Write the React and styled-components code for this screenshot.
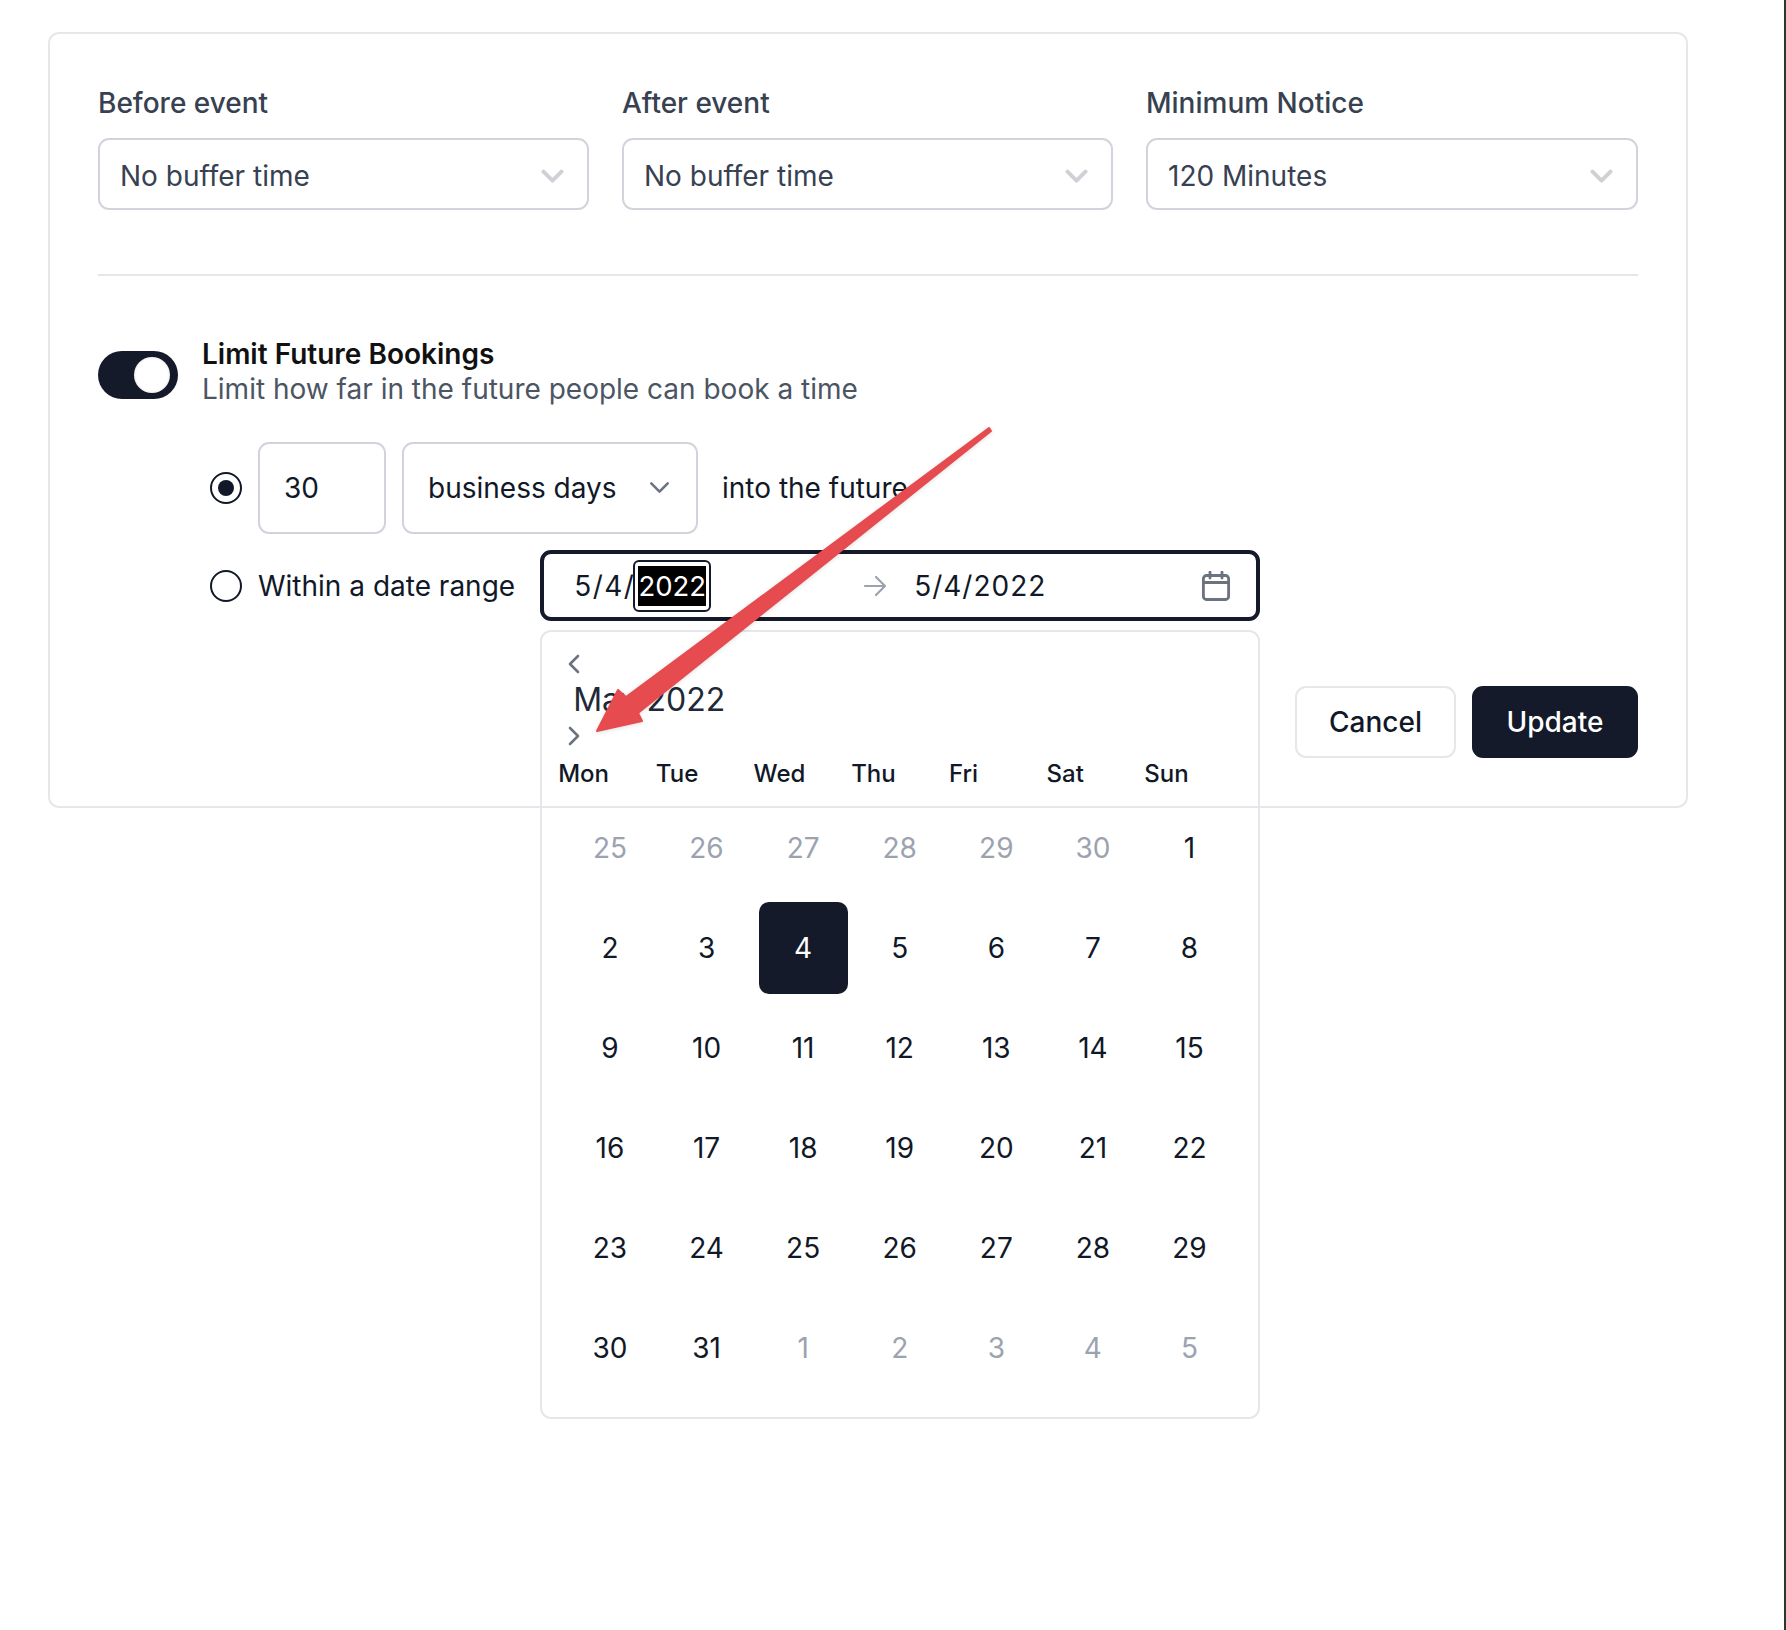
import React from 'react';
import styled, { createGlobalStyle } from 'styled-components';

const GlobalStyle = createGlobalStyle`
  html, body {
    margin: 0;
    padding: 0;
    background: #fff;
  }
  * {
    box-sizing: border-box;
  }
`;

const Chevron = ({ size = 23, color = '#cfd1d6', width = 4 }) => (
  <svg width={size} height={size * 0.62} viewBox="0 0 23 14" fill="none">
    <path d="M2.5 2.5l9 9 9-9" stroke={color} strokeWidth={width} strokeLinecap="round" strokeLinejoin="round" />
  </svg>
);

const days = [
  [25, 26, 27, 28, 29, 30, 1],
  [2, 3, 4, 5, 6, 7, 8],
  [9, 10, 11, 12, 13, 14, 15],
  [16, 17, 18, 19, 20, 21, 22],
  [23, 24, 25, 26, 27, 28, 29],
  [30, 31, 1, 2, 3, 4, 5],
];

const isMuted = (row, value) => (row === 0 && value > 1) || (row === 5 && value < 6);

const App = () => (
  <Page>
    <GlobalStyle />
    <Card>
      <Fields>
        {[
          ['Before event', 'No buffer time'],
          ['After event', 'No buffer time'],
          ['Minimum Notice', '120 Minutes'],
        ].map(([label, value]) => (
          <div key={label}>
            <FieldLabel>{label}</FieldLabel>
            <SelectBox>
              <span>{value}</span>
              <Chevron />
            </SelectBox>
          </div>
        ))}
      </Fields>
      <Divider />
      <ToggleRow>
        <Toggle />
        <div>
          <ToggleTitle>Limit Future Bookings</ToggleTitle>
          <ToggleDesc>Limit how far in the future people can book a time</ToggleDesc>
        </div>
      </ToggleRow>
      <Options>
        <OptionRow>
          <Radio $checked />
          <NumberBox>30</NumberBox>
          <UnitSelect>
            <span>business days</span>
            <Chevron size={21} color="#6b7280" width={2.8} />
          </UnitSelect>
          <OptionText>into the future</OptionText>
        </OptionRow>
        <OptionRow>
          <Radio />
          <OptionText>Within a date range</OptionText>
          <RangeWrap>
            <RangeField>
              <StartDate>
                5/4/<Segment>2022</Segment>
              </StartDate>
              <svg width="24" height="22" viewBox="0 0 24 22" fill="none">
                <path d="M2 11h20M13 2l9 9-9 9" stroke="#9ca3af" strokeWidth="2.2" strokeLinecap="round" strokeLinejoin="round" />
              </svg>
              <EndDate>5/4/2022</EndDate>
              <svg width="28" height="30" viewBox="0 0 28 30" fill="none">
                <rect x="1.4" y="4.5" width="25.2" height="24" rx="3" stroke="#6b7280" strokeWidth="2.8" />
                <path d="M1.4 11.5h25.2M8 1v6M20 1v6" stroke="#6b7280" strokeWidth="2.8" strokeLinecap="round" />
              </svg>
            </RangeField>
            <Popup>
              <MonthNav>
                <svg width="14" height="22" viewBox="0 0 14 22" fill="none">
                  <path d="M11 3l-8 8 8 8" stroke="#6b7280" strokeWidth="2.6" strokeLinecap="round" strokeLinejoin="round" />
                </svg>
                <MonthTitle>May 2022</MonthTitle>
                <svg width="14" height="22" viewBox="0 0 14 22" fill="none">
                  <path d="M3 3l8 8-8 8" stroke="#6b7280" strokeWidth="2.6" strokeLinecap="round" strokeLinejoin="round" />
                </svg>
              </MonthNav>
              <Weekdays>
                {['Mon', 'Tue', 'Wed', 'Thu', 'Fri', 'Sat', 'Sun'].map((d) => (
                  <span key={d}>{d}</span>
                ))}
              </Weekdays>
              <DayGrid>
                {days.map((week, row) =>
                  week.map((value, col) => (
                    <Day key={`${row}-${col}`} $muted={isMuted(row, value)} $selected={row === 1 && value === 4}>
                      {value}
                    </Day>
                  ))
                )}
              </DayGrid>
            </Popup>
          </RangeWrap>
        </OptionRow>
      </Options>
      <Actions>
        <CancelButton>Cancel</CancelButton>
        <UpdateButton>Update</UpdateButton>
      </Actions>
    </Card>
    <ArrowMark width="1786" height="1630" viewBox="0 0 1786 1630">
      <polygon
        points="989,428 991,431 638,713 642,721 597,731 618,690 626,697"
        fill="#e54b4f"
        stroke="#e54b4f"
        strokeWidth="2"
        strokeLinejoin="round"
      />
    </ArrowMark>
  </Page>
);

export default App;

const Page = styled.div`
  position: relative;
  width: 1786px;
  height: 1630px;
  padding: 32px 0 0 48px;
  border-right: 2px solid #27392b;
  font-family: Inter, "Liberation Sans", sans-serif;
  font-size: 28px;
  color: #111827;
  overflow: hidden;
`;

const Card = styled.div`
  width: 1640px;
  height: 776px;
  padding: 50px 48px 47px;
  border: 2px solid #e5e7eb;
  border-radius: 11px;
`;

const Fields = styled.div`
  display: grid;
  grid-template-columns: 491px 491px 492px;
  gap: 33px;
`;

const FieldLabel = styled.div`
  font-weight: 500;
  line-height: 38px;
  color: #374151;
  margin-bottom: 16px;
`;

const SelectBox = styled.div`
  height: 72px;
  padding: 4px 23px 0 20px;
  display: flex;
  align-items: center;
  justify-content: space-between;
  border: 2px solid #d1d5db;
  border-radius: 11px;
  color: #374151;
`;

const Divider = styled.div`
  height: 2px;
  margin: 64px 0 61px;
  background: #e5e7eb;
`;

const ToggleRow = styled.div`
  display: flex;
  align-items: center;
  gap: 24px;
`;

const Toggle = styled.div`
  position: relative;
  width: 80px;
  height: 48px;
  margin-top: 6px;
  border-radius: 24px;
  background: #141a29;

  &::after {
    content: '';
    position: absolute;
    right: 8px;
    top: 6px;
    width: 36px;
    height: 36px;
    border-radius: 50%;
    background: #fff;
    box-shadow: inset 0 0 3px rgba(0, 0, 0, 0.15);
  }
`;

const ToggleTitle = styled.div`
  font-weight: 600;
  line-height: 35px;
  color: #111;
`;

const ToggleDesc = styled.div`
  line-height: 35px;
  color: #4b5563;
`;

const Options = styled.div`
  margin: 35px 0 0 112px;
  display: flex;
  flex-direction: column;
  gap: 16px;
`;

const OptionRow = styled.div`
  display: flex;
  align-items: center;
`;

const Radio = styled.div`
  width: 32px;
  height: 32px;
  margin-right: 16px;
  display: flex;
  align-items: center;
  justify-content: center;
  border: 2px solid #111827;
  border-radius: 50%;

  &::after {
    content: '';
    width: 16px;
    height: 16px;
    border-radius: 50%;
    background: ${(p) => (p.$checked ? '#111827' : 'transparent')};
  }
`;

const NumberBox = styled.div`
  width: 128px;
  height: 92px;
  margin-right: 16px;
  padding-left: 24px;
  display: flex;
  align-items: center;
  border: 2px solid #d1d5db;
  border-radius: 11px;
`;

const UnitSelect = styled.div`
  width: 296px;
  height: 92px;
  margin-right: 24px;
  padding: 0 26px 0 24px;
  display: flex;
  align-items: center;
  justify-content: space-between;
  border: 2px solid #d1d5db;
  border-radius: 11px;
`;

const OptionText = styled.span`
  color: #111827;
`;

const RangeWrap = styled.div`
  position: relative;
  margin-left: 25px;
  width: 720px;
`;

const RangeField = styled.div`
  height: 71px;
  padding: 0 26px 0 30px;
  display: flex;
  align-items: center;
  border: 4px solid #141a29;
  border-radius: 11px;
`;

const StartDate = styled.div`
  width: 289px;
  letter-spacing: 1.5px;
`;

const Segment = styled.span`
  position: relative;
  display: inline-block;
  margin-left: 3px;
  font-size: 27.5px;
  line-height: 40px;
  background: #000;
  color: #fff;
  letter-spacing: 0;

  &::after {
    content: '';
    position: absolute;
    inset: -6px -5px;
    border: 2px solid #141a29;
    border-radius: 6px;
  }
`;

const EndDate = styled.div`
  flex: 1;
  margin-left: 27px;
  letter-spacing: 1px;
`;

const Popup = styled.div`
  position: absolute;
  top: 80px;
  left: 0;
  right: 0;
  height: 789px;
  padding: 21px 0 0 16px;
  border: 2px solid #e5e7eb;
  border-radius: 11px;
`;

const MonthNav = styled.div`
  padding-left: 9px;
  display: flex;
  flex-direction: column;
  align-items: flex-start;
  height: 94px;
  justify-content: space-between;
`;

const MonthTitle = styled.div`
  font-size: 32px;
  line-height: 40px;
  color: #1f2937;
  padding-left: 6px;
`;

const Weekdays = styled.div`
  display: grid;
  grid-template-columns: repeat(7, 97.7px);
  margin-top: 11px;
  font-size: 24px;
  font-weight: 500;
  line-height: 32px;
`;

const DayGrid = styled.div`
  display: grid;
  grid-template-columns: repeat(7, 96.6px);
  grid-auto-rows: 100px;
  margin: 8px 0 0 3.5px;
`;

const Day = styled.div`
  display: flex;
  align-items: center;
  justify-content: center;
  width: 89px;
  height: 92px;
  margin: 4px auto;
  border-radius: 10px;
  font-size: 28px;
  background: ${(p) => (p.$selected ? '#141a29' : 'transparent')};
  color: ${(p) => (p.$selected ? '#fff' : p.$muted ? '#9ca3af' : '#111827')};
`;

const Actions = styled.div`
  margin-top: 65px;
  display: flex;
  justify-content: flex-end;
  gap: 16px;
`;

const CancelButton = styled.div`
  width: 161px;
  height: 72px;
  display: flex;
  align-items: center;
  justify-content: center;
  border: 2px solid #e5e7eb;
  border-radius: 11px;
  font-weight: 500;
`;

const UpdateButton = styled(CancelButton)`
  width: 166px;
  border-color: #141a29;
  background: #141a29;
  color: #fff;
`;

const ArrowMark = styled.svg`
  position: absolute;
  top: 0;
  left: 0;
  pointer-events: none;
  filter: drop-shadow(0 1px 2px rgba(0, 0, 0, 0.12));
`;
